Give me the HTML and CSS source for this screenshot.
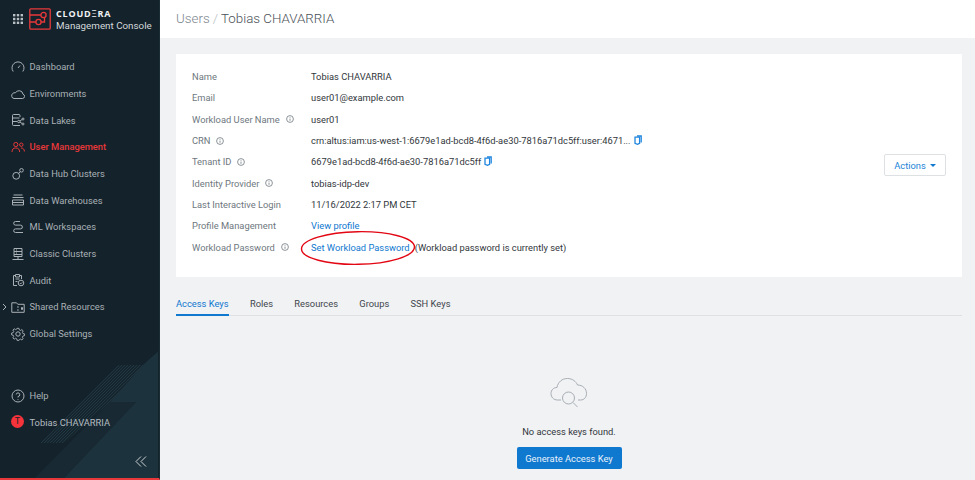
FILE: index.html
```html
<!DOCTYPE html>
<html lang="en">
<head>
<meta charset="utf-8">
<title>Users / Tobias CHAVARRIA</title>
<link rel="stylesheet" href="styles.css">
</head>
<body>
<div class="app">
  <aside class="sidebar">
    <svg class="side-art" viewBox="0 0 160 130" width="160" height="130" aria-hidden="true">
      <defs><pattern id="hatch" width="2.100" height="2.100" patternUnits="userSpaceOnUse" patternTransform="rotate(-45)"><rect width="2.100" height=".8" fill="#223843"/></pattern></defs>
      <path class="art-main" d="M62 130 L136 52 L110 52 L143 15 L158 1.500 L158 130 Z"/>
      <path class="art-cut" d="M33 130 L110 52 L136 52 L62 130 Z"/>
      <path fill="url(#hatch)" d="M40 93 L118 15 L143 15 L110 52 L64 93 Z"/>
    </svg>
    <div class="brand">
      <svg class="grid-icon" viewBox="0 0 10 10" width="10" height="10"><g fill="#b9c0c5"><rect width="2.400" height="2.400"/><rect x="3.800" width="2.400" height="2.400"/><rect x="7.600" width="2.400" height="2.400"/><rect y="3.800" width="2.400" height="2.400"/><rect x="3.800" y="3.800" width="2.400" height="2.400"/><rect x="7.600" y="3.800" width="2.400" height="2.400"/><rect y="7.600" width="2.400" height="2.400"/><rect x="3.800" y="7.600" width="2.400" height="2.400"/><rect x="7.600" y="7.600" width="2.400" height="2.400"/></g></svg>
      <svg class="logo" viewBox="0 0 22 22" width="22" height="22" fill="none" stroke="#e8383a" stroke-width="1.300"><rect x=".8" y=".8" width="20.400" height="20.400" rx="1"/><circle cx="14.500" cy="7" r="2.600"/><circle cx="9.500" cy="14" r="2.600"/><path d="M1 7h10.900M1 14h5.900M12.100 14h3.400V9.600"/></svg>
      <div class="brand-text">
        <div class="brand-name">CLOUD<span class="brand-e">Ξ</span>RA</div>
        <div class="brand-sub">Management Console</div>
      </div>
    </div>
    <nav class="nav">
      <a class="nav-item"><svg class="ni" viewBox="0 0 14 14"><path d="M2.200 11.500A6 6 0 1 1 11.800 11.500M7 8l2-2.500"/></svg>Dashboard</a>
      <a class="nav-item"><svg class="ni" viewBox="0 0 14 14"><path d="M3 11.500H11.500A2.200 2.200 0 0 0 12 7.200 4 4 0 0 0 4.500 5.800 3 3 0 0 0 .8 9.500 2.500 2.500 0 0 0 3 11.500Z"/></svg>Environments</a>
      <a class="nav-item"><svg class="ni" viewBox="0 0 14 14"><path d="M9 12.500H2.500a1 1 0 0 1-1-1V2.500a1 1 0 0 1 1-1H8a1 1 0 0 1 1 1V4M1.500 5h7M1.500 8.500H6"/><circle cx="7.800" cy="8.500" r="1.200"/><circle cx="12" cy="6" r="1"/><circle cx="12" cy="11" r="1"/><path d="M9 8l2-1.500M9 9l2 1.500"/></svg>Data Lakes</a>
      <a class="nav-item active"><svg class="ni" viewBox="0 0 14 14"><circle cx="4.800" cy="4.500" r="2.100"/><circle cx="10.300" cy="4.700" r="1.700"/><path d="M1 12c0-3 1.500-4 3.800-4s3.800 1 3.800 4M10 8c2 0 3.400 1 3.400 3.500"/></svg>User Management</a>
      <a class="nav-item"><svg class="ni" viewBox="0 0 14 14"><circle cx="5.200" cy="8.800" r="3.400"/><circle cx="10.500" cy="3.300" r="1.800"/><path d="M7.500 6.500L9.300 4.600"/></svg>Data Hub Clusters</a>
      <a class="nav-item"><svg class="ni" viewBox="0 0 14 14"><path d="M2.500 2h9M1.500 4.500h11M1.500 7h11v5h-11zM1.500 9.500h11"/></svg>Data Warehouses</a>
      <a class="nav-item"><svg class="ni" viewBox="0 0 14 14"><path d="M9 1.500H4.500a1.800 1.800 0 0 0 0 3.600h5a1.900 1.900 0 0 1 0 3.800h-5a1.800 1.800 0 0 0 0 3.600H12"/></svg>ML Workspaces</a>
      <a class="nav-item"><svg class="ni" viewBox="0 0 14 14"><path d="M3 1.500h8v3H3zM3 4.500h8v3H3zM3 7.500h8v2H3zM7 9.500v2.500M1.500 12.500h11M5 3h1M5 6h1"/></svg>Classic Clusters</a>
      <a class="nav-item"><svg class="ni" viewBox="0 0 14 14"><path d="M5 2.500H2.500v10H6M9 2.500h1.500V6M4.500 1.500h4v2.500h-4zM4.500 6h4M4.500 8.500h2"/><circle cx="10" cy="10" r="2.800"/><path d="M8.800 10l.9.900 1.500-1.500"/></svg>Audit</a>
      <a class="nav-item"><svg class="chev" viewBox="0 0 5 8"><path d="M1 1l3 3-3 3"/></svg><svg class="ni" viewBox="0 0 14 14"><path d="M.8 2.800h4.700l1.300 1.500h6.400v8H.8zM6 7h1.800M6 10h1.800"/><path d="M10.500 7.500h1v2h-1z"/></svg>Shared Resources</a>
      <a class="nav-item"><svg class="ni" viewBox="0 0 14 14"><circle cx="7" cy="7" r="2.200"/><path d="M6 .9h2l.4 1.700 1.300.6 1.500-.9 1.400 1.400-.9 1.500.6 1.300 1.700.4v2l-1.700.4-.6 1.300.9 1.500-1.400 1.400-1.500-.9-1.300.6L8 14H6l-.4-1.700-1.300-.6-1.500.9-1.400-1.400.9-1.500-.6-1.300L0 8V6l1.700-.4.6-1.300-.9-1.500 1.400-1.400 1.500.9 1.300-.6z" transform="translate(.6 .5) scale(.92)"/></svg>Global Settings</a>
    </nav>
    <div class="side-foot">
      <a class="nav-item"><svg class="ni" viewBox="0 0 14 14"><circle cx="7" cy="7" r="6"/><path d="M5.200 5.500A1.800 1.800 0 1 1 7 7.500V8.500M7 10v.8"/></svg>Help</a>
      <a class="nav-item user"><span class="avatar">T</span>Tobias CHAVARRIA</a>
    </div>
    <div class="collapse"><svg viewBox="0 0 12 11" width="12" height="11"><path d="M6 .5L1 5.500l5 5M11 .5L6 5.500l5 5"/></svg></div>
  </aside>

  <main class="main">
    <header class="topbar"><span class="crumb">Users</span><span class="sep">/</span><span class="crumb-cur">Tobias CHAVARRIA</span></header>
    <div class="content">
      <section class="card">
        <div class="details">
          <div class="lbl">Name</div><div class="val">Tobias CHAVARRIA</div>
          <div class="lbl">Email</div><div class="val">user01@example.com</div>
          <div class="lbl">Workload User Name<svg class="info" viewBox="0 0 8 8"><circle cx="4" cy="4" r="3.400"/><path d="M4 3.600v2.200M4 2v.7"/></svg></div><div class="val">user01</div>
          <div class="lbl">CRN<svg class="info" viewBox="0 0 8 8"><circle cx="4" cy="4" r="3.400"/><path d="M4 3.600v2.200M4 2v.7"/></svg></div><div class="val">crn:altus:iam:us-west-1:6679e1ad-bcd8-4f6d-ae30-7816a71dc5ff:user:4671...<svg class="copy" viewBox="0 0 8 10"><path d="M3 1H7.200V7.500"/><path d="M1 2.200H5.600V8.300L3.500 9.300 1 8.300Z"/></svg></div>
          <div class="lbl">Tenant ID<svg class="info" viewBox="0 0 8 8"><circle cx="4" cy="4" r="3.400"/><path d="M4 3.600v2.200M4 2v.7"/></svg></div><div class="val">6679e1ad-bcd8-4f6d-ae30-7816a71dc5ff<svg class="copy" viewBox="0 0 8 10"><path d="M3 1H7.200V7.500"/><path d="M1 2.200H5.600V8.300L3.500 9.300 1 8.300Z"/></svg></div>
          <div class="lbl">Identity Provider<svg class="info" viewBox="0 0 8 8"><circle cx="4" cy="4" r="3.400"/><path d="M4 3.600v2.200M4 2v.7"/></svg></div><div class="val">tobias-idp-dev</div>
          <div class="lbl">Last Interactive Login</div><div class="val">11/16/2022 2:17 PM CET</div>
          <div class="lbl">Profile Management</div><div class="val"><a class="link">View profile</a></div>
          <div class="lbl">Workload Password<svg class="info" viewBox="0 0 8 8"><circle cx="4" cy="4" r="3.400"/><path d="M4 3.600v2.200M4 2v.7"/></svg></div><div class="val"><a class="link">Set Workload Password</a><span class="note">(Workload password is currently set)</span></div>
        </div>
        <button class="actions">Actions<span class="caret"></span></button>
        <svg class="ring" viewBox="0 0 116 36" width="116" height="36" aria-hidden="true"><ellipse cx="58" cy="18" rx="56.500" ry="16.300" transform="rotate(-1 58 18)"/></svg>
      </section>
      <div class="tabs">
        <a class="tab on">Access Keys</a><a class="tab">Roles</a><a class="tab">Resources</a><a class="tab">Groups</a><a class="tab">SSH Keys</a>
      </div>
      <div class="empty">
        <svg class="empty-icon" viewBox="0 0 38 32" width="38" height="32"><path d="M11 23H7.500C3.500 23 1 20 1 16.500S3.500 10.500 7 10.500C8 5 12 1.500 17.500 1.500c5 0 8.500 3 10 6.500 5 0 9 3.500 9 8.500 0 4-2.500 6.500-6 6.500H28"/><circle cx="18.500" cy="21" r="6"/><path d="M23 25.500l4.500 4.500"/></svg>
        <p class="empty-text">No access keys found.</p>
        <button class="primary">Generate Access Key</button>
      </div>
    </div>
  </main>
</div>
</body>
</html>
```
FILE: styles.css
```css
* { box-sizing: border-box; }
html, body { margin: 0; height: 100%; overflow: hidden; }
body { font-family: Roboto, "Liberation Sans", sans-serif; font-size: 9.330px; color: #32373c; background: #f1f2f4; }
.app { display: flex; height: 480px; }

.sidebar { position: relative; flex: 0 0 160px; width: 160px; height: 480px; background: #14222b; border-bottom: 2px solid #e8383a; border-right: 1px solid #1c2c35; display: flex; flex-direction: column; overflow: hidden; }
.side-art { position: absolute; left: 0; bottom: -2px; }
.art-main { fill: #1c323d; }
.art-cut { fill: #182933; }
.brand { position: relative; display: flex; align-items: center; height: 38px; padding: 0 0 0 13px; }
.grid-icon { flex: none; margin-right: 6px; }
.logo { flex: none; margin-right: 5px; }
.brand-text { color: #f1f3f4; white-space: nowrap; padding-top: 1px; }
.brand-name { font-family: "Open Sans", Roboto, sans-serif; font-weight: 700; font-size: 9px; letter-spacing: .8px; line-height: 11px; }
.brand-e { font-weight: 400; font-family: Roboto, sans-serif; font-size: 9px; }
.brand-sub { font-size: 9.800px; line-height: 12px; color: #d3d8db; }
.nav { position: relative; display: flex; flex-direction: column; padding-top: 15.600px; }
.nav-item { position: relative; display: flex; align-items: center; height: 26.67px; padding-left: 29.500px; color: #a9b1b6; white-space: nowrap; }
.nav-item.active { color: #e8383a; font-weight: 500; }
.ni { position: absolute; left: 11px; top: 6.500px; width: 14px; height: 14px; fill: none; stroke: #a9b1b6; stroke-width: 1; }
.active .ni { stroke: #e8383a; }
.chev { position: absolute; left: 1.500px; top: 9.500px; width: 5px; height: 8px; fill: none; stroke: #a9b1b6; stroke-width: 1; }
.side-foot { position: relative; display: flex; flex-direction: column; margin-top: 35.400px; }
.avatar { position: absolute; left: 11px; top: 6.500px; width: 13px; height: 13px; border-radius: 50%; background: #f5333a; color: #14222b; font-size: 9px; text-align: center; line-height: 13px; }
.user { color: #b5bcc0; }
.collapse { position: absolute; right: 12px; bottom: 11px; line-height: 0; }
.collapse svg { fill: none; stroke: #ccd1d4; stroke-width: 1; }

.main { flex: 1; min-width: 0; display: flex; flex-direction: column; }
.topbar { height: 38px; background: #fff; padding: 0 16px; display: flex; align-items: center; font-size: 13.330px; font-weight: 300; padding-bottom: 1px; }
.crumb { color: #7d878f; }
.sep { color: #b8bec3; margin: 0 3px; }
.crumb-cur { color: #4a5157; }
.content { padding: 16px 13px 0 16px; }
.card { position: relative; background: #fff; height: 223px; padding: 12px 16px 0; }
.details { display: grid; grid-template-columns: 119px 1fr; grid-auto-rows: 21.33px; align-items: center; }
.lbl { color: #6e777e; display: flex; align-items: center; white-space: nowrap; }
.val { color: #32373c; display: flex; align-items: center; white-space: nowrap; }
.info { width: 8px; height: 8px; margin-left: 6px; fill: none; stroke: #6e777e; stroke-width: .8; }
.copy { width: 8px; height: 10px; margin-left: 3px; margin-top: -1px; fill: #fff; stroke: #1f85de; stroke-width: 1.300; }
.link { color: #0f78cf; }
.note { margin-left: 5px; }
.actions { position: absolute; right: 16px; top: 100px; width: 62px; height: 22px; padding: 0; background: #fff; border: 1px solid #dde1e4; border-radius: 2px; color: #2183d6; font: inherit; display: flex; align-items: center; justify-content: center; }
.caret { width: 0; height: 0; margin-left: 4px; border-left: 3.500px solid transparent; border-right: 3.500px solid transparent; border-top: 3.500px solid #0f78cf; }
.ring { position: absolute; left: 124px; top: 176.300px; fill: none; stroke: #e30613; stroke-width: 1.400; }

.tabs { display: flex; gap: 21.300px; margin-top: 14px; height: 25px; border-bottom: 1px solid #dfe2e5; }
.tab { height: 25px; padding-top: 6.500px; color: #3f464c; }
.tab.on { color: #0f78cf; border-bottom: 2px solid #0f78cf; }
.empty { display: flex; flex-direction: column; align-items: center; padding-top: 61px; }
.empty-icon { fill: none; stroke: #a7adb3; stroke-width: 1; display: block; }
.empty-text { margin: 16px 0 0; line-height: 13px; color: #32373c; }
.primary { margin-top: 9px; width: 105px; height: 22px; padding: 0; background: #0f78cf; border: 0; border-radius: 2px; color: #e8f2fb; font: inherit; }
```
